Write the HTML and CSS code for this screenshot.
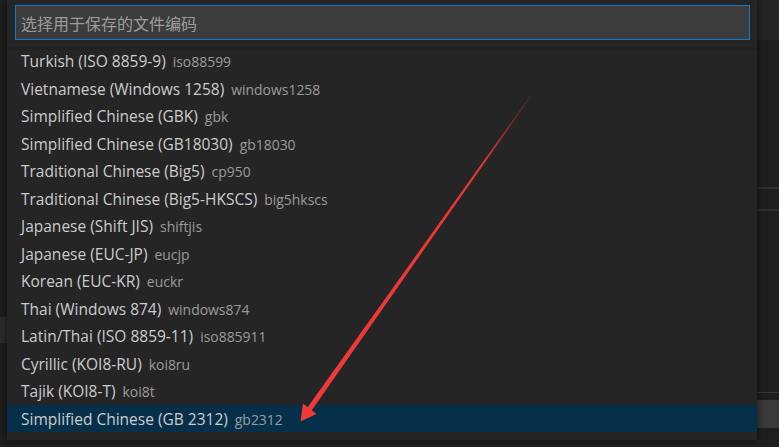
FILE: index.html
```html
<!DOCTYPE html>
<html lang="zh-CN">
<head>
<meta charset="utf-8">
<title>选择用于保存的文件编码</title>
<link rel="stylesheet" href="styles.css">
</head>
<body>
<div class="stage">
  <div class="gutter-left">
    <div class="gl-top"></div>
    <div class="gl-block"></div>
  </div>
  <div class="quick">
    <div class="header">
      <div class="input">选择用于保存的文件编码</div>
    </div>
    <div class="list">
      <div class="row"><span class="label">Turkish (ISO 8859-9)</span><span class="desc">iso88599</span></div>
      <div class="row"><span class="label">Vietnamese (Windows 1258)</span><span class="desc">windows1258</span></div>
      <div class="row"><span class="label">Simplified Chinese (GBK)</span><span class="desc">gbk</span></div>
      <div class="row"><span class="label">Simplified Chinese (GB18030)</span><span class="desc">gb18030</span></div>
      <div class="row"><span class="label">Traditional Chinese (Big5)</span><span class="desc">cp950</span></div>
      <div class="row"><span class="label">Traditional Chinese (Big5-HKSCS)</span><span class="desc">big5hkscs</span></div>
      <div class="row"><span class="label">Japanese (Shift JIS)</span><span class="desc">shiftjis</span></div>
      <div class="row"><span class="label">Japanese (EUC-JP)</span><span class="desc">eucjp</span></div>
      <div class="row"><span class="label">Korean (EUC-KR)</span><span class="desc">euckr</span></div>
      <div class="row"><span class="label">Thai (Windows 874)</span><span class="desc">windows874</span></div>
      <div class="row"><span class="label">Latin/Thai (ISO 8859-11)</span><span class="desc">iso885911</span></div>
      <div class="row"><span class="label">Cyrillic (KOI8-RU)</span><span class="desc">koi8ru</span></div>
      <div class="row"><span class="label">Tajik (KOI8-T)</span><span class="desc">koi8t</span></div>
      <div class="row selected"><span class="label">Simplified Chinese (GB 2312)</span><span class="desc">gb2312</span></div>
    </div>
  </div>
  <div class="gutter-right">
    <div class="gr-top"></div>
    <div class="gr-line gr-line1"></div>
    <div class="gr-line gr-line2"></div>
    <div class="gr-line gr-line3"></div>
    <div class="gr-block"></div>
  </div>
</div>
<svg class="arrow" width="779" height="447" viewBox="0 0 779 447" xmlns="http://www.w3.org/2000/svg">
  <defs>
    <linearGradient id="fade" gradientUnits="userSpaceOnUse" x1="531" y1="96" x2="300" y2="422">
      <stop offset="0" stop-color="#ee3434" stop-opacity="0.15"/>
      <stop offset="0.22" stop-color="#ee3434" stop-opacity="1"/>
      <stop offset="1" stop-color="#f03a3a" stop-opacity="1"/>
    </linearGradient>
  </defs>
  <polygon fill="url(#fade)" points="300.5,421.5 303,403.5 307.6,407.2 529.6,96.7 530.4,97.3 311.8,410.2 316.5,414"/>
</svg>
</body>
</html>
```

FILE: styles.css
```css
html, body {
  margin: 0;
  padding: 0;
}
body {
  width: 779px;
  height: 447px;
  overflow: hidden;
  background: #1e1e1e;
  position: relative;
  font-family: "Open Sans", "Noto Sans", "Noto Sans CJK SC", sans-serif;
}
.stage {
  display: flex;
  height: 447px;
}
.gutter-left {
  width: 7px;
  flex: none;
  display: flex;
  flex-direction: column;
}
.gl-top {
  height: 317px;
}
.gl-block {
  height: 26px;
  background: #2d2d30;
}
.quick {
  width: 750px;
  height: 440px;
  flex: none;
  background: #252526;
  box-shadow: 0 0 8px rgba(0, 0, 0, 0.6);
  display: flex;
  flex-direction: column;
  position: relative;
  z-index: 1;
}
.header {
  height: 47px;
  box-sizing: border-box;
  padding: 5px 7px 7px 8px;
}
.input {
  height: 35px;
  box-sizing: border-box;
  border: 1px solid #0e7acc;
  background: #3c3c3c;
  color: #9c9c9c;
  font-family: "Noto Sans CJK SC", "Noto Sans", sans-serif;
  font-size: 16px;
  line-height: 34px;
  padding-left: 5px;
}
.list {
  flex: 1;
  background: linear-gradient(#222223 0 3.5px, #252526 3.5px);
}
.row {
  height: 27.5px;
  line-height: 28.5px;
  padding-left: 14px;
  white-space: nowrap;
  font-size: 15.5px;
}
.row.selected {
  background: #062f4a;
}
.label {
  color: #cccccc;
}
.desc {
  color: #cccccc;
  opacity: 0.7;
  font-size: 0.9em;
  margin-left: 0.5em;
}
.gutter-right {
  flex: 1;
  display: flex;
  flex-direction: column;
}
.gr-top {
  height: 40px;
  background: #252526;
  margin-bottom: 147px;
}
.gr-line {
  height: 2px;
  background: #2f2f2f;
}
.gr-line1 {
  margin-bottom: 20px;
}
.gr-line2 {
  margin-bottom: 181px;
}
.gr-line3 {
  height: 1px;
  background: #3a3a3a;
  margin-bottom: 7px;
}
.gr-block {
  height: 28px;
  background: #3a3a3a;
}
.arrow {
  position: absolute;
  left: 0;
  top: 0;
  z-index: 2;
  pointer-events: none;
}
```
